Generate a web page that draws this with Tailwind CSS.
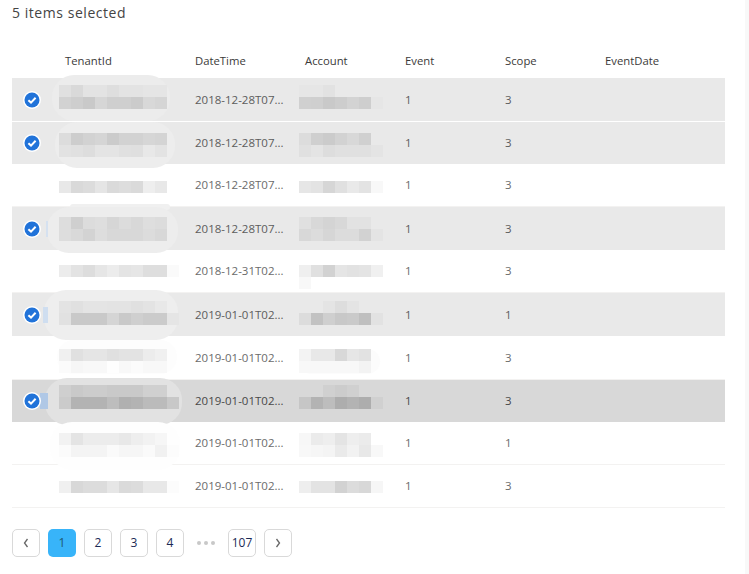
<!DOCTYPE html>
<html lang="en">
<head>
    <meta charset="UTF-8">
    <title>Items</title>
    <script src="https://cdn.jsdelivr.net/npm/@tailwindcss/browser@4"></script>
</head>
<body class="bg-white overflow-hidden font-['Open_Sans',sans-serif]">
    <div class="relative w-[749px] h-[574px] overflow-hidden">
        <div class="absolute top-0 right-0 bottom-0 w-[4px] bg-[#f8f8f8]"></div>

        <div class="pl-3 pt-[3px] w-[725px]">
            <h1 class="h-[20px] leading-[20px] text-[14px] tracking-[0.55px] text-[#444444] font-normal">5 items selected</h1>

            <!-- header -->
            <div class="mt-[22px] h-[33px] grid grid-cols-[53px_130px_110px_100px_100px_100px_1fr] items-center text-[11.3px] text-[#3b3a39] pb-[1px]">
                <span></span>
                <span>TenantId</span>
                <span>DateTime</span>
                <span>Account</span>
                <span>Event</span>
                <span>Scope</span>
                <span>EventDate</span>
            </div>

            <div id="rows"></div>

            <!-- pagination -->
            <nav class="mt-[21px] flex items-center gap-2 text-[12px] text-[#1b2a55]">
                <button class="w-7 h-7 flex items-center justify-center rounded-[5px] border border-[#d9d9d9] bg-white">
                    <svg width="6" height="10" viewBox="0 0 6 10" fill="none" stroke="#666666" stroke-width="1.3"><path d="M4.5 1 L1.5 5 L4.5 9"/></svg>
                </button>
                <button class="w-7 h-7 flex items-center justify-center rounded-[5px] bg-[#38b4f9] text-[#1c5a72]">1</button>
                <button class="w-7 h-7 flex items-center justify-center rounded-[5px] border border-[#d9d9d9] bg-white">2</button>
                <button class="w-7 h-7 flex items-center justify-center rounded-[5px] border border-[#d9d9d9] bg-white">3</button>
                <button class="w-7 h-7 flex items-center justify-center rounded-[5px] border border-[#d9d9d9] bg-white">4</button>
                <span class="w-[28px] flex justify-center gap-[3px]">
                    <i class="w-[4px] h-[4px] rounded-full bg-[#c8c8c8]"></i>
                    <i class="w-[4px] h-[4px] rounded-full bg-[#c8c8c8]"></i>
                    <i class="w-[4px] h-[4px] rounded-full bg-[#c8c8c8]"></i>
                </span>
                <button class="w-7 h-7 flex items-center justify-center rounded-[5px] border border-[#d9d9d9] bg-white">107</button>
                <button class="w-7 h-7 flex items-center justify-center rounded-[5px] border border-[#d9d9d9] bg-white">
                    <svg width="6" height="10" viewBox="0 0 6 10" fill="none" stroke="#666666" stroke-width="1.3"><path d="M1.5 1 L4.5 5 L1.5 9"/></svg>
                </button>
            </nav>
        </div>

        <!-- smudged areas over the table -->
        <div id="blobs" aria-hidden="true"></div>
        <div id="mosaic" aria-hidden="true"></div>
        <div id="checks"></div>
    </div>

    <script>
        const rows = [
            { h: 44, sel: 3, date: '2018-12-28T07...', event: 1, scope: 3 },
            { h: 42, sel: 1, date: '2018-12-28T07...', event: 1, scope: 3 },
            { h: 43, sel: 0, date: '2018-12-28T07...', event: 1, scope: 3 },
            { h: 43, sel: 1, date: '2018-12-28T07...', event: 1, scope: 3 },
            { h: 43, sel: 0, date: '2018-12-31T02...', event: 1, scope: 3 },
            { h: 43, sel: 1, date: '2019-01-01T02...', event: 1, scope: 1 },
            { h: 44, sel: 0, date: '2019-01-01T02...', event: 1, scope: 3 },
            { h: 42, sel: 2, date: '2019-01-01T02...', event: 1, scope: 3 },
            { h: 43, sel: 0, date: '2019-01-01T02...', event: 1, scope: 1 },
            { h: 43, sel: 0, date: '2019-01-01T02...', event: 1, scope: 3 },
        ];

        // --- Table rows ---
        const rowClass = {
            0: 'bg-white border-b border-[#f3f2f1] text-[#6b6b6b]',
            1: 'bg-[#e9e9e9] text-[#5c5c5c]',
            2: 'bg-[#d8d8d8] text-[#484848]',
            3: 'bg-[#e9e9e9] border-b border-white text-[#5c5c5c]',
        };
        document.getElementById('rows').innerHTML = rows.map(r => `
            <div class="grid grid-cols-[53px_130px_110px_100px_100px_100px_1fr] items-center text-[11.5px] ${rowClass[r.sel]}" style="height:${r.h}px">
                <span></span><span></span>
                <span>${r.date}</span>
                <span></span>
                <span>${r.event}</span>
                <span>${r.scope}</span>
                <span></span>
            </div>`).join('');

        // --- Blurred blobs: [x, y, w, h, colour] ---
        const blobs = [
            [52, 75, 118, 46, '#ececec'], [55, 122, 120, 46, '#ededed'], [70, 204, 100, 6, '#f0f0f0'],
            [47, 207, 131, 46, '#ededed'], [44, 290, 134, 50, '#eeeeee'], [57, 340, 120, 34, '#fdfdfd'],
            [45, 378, 137, 47, '#e2e2e2'], [50, 422, 130, 48, '#fefefe'], [299, 349, 81, 25, '#fcfcfc'],
        ];
        document.getElementById('blobs').innerHTML = blobs.map(b =>
            `<div class="absolute rounded-[22px]" style="left:${b[0]}px;top:${b[1]}px;width:${b[2]}px;height:${b[3]}px;background:${b[4]}"></div>`).join('');

        // --- Mosaic strips: [x, y, grey values of the 12px cells] ---
        const strips = [
            [59, 85, 'e0 d9 e3 e3 de e3 e3 e5 e5'], [59, 97, 'd2 ce c9 d6 cf cf cb d8 d5'],
            [59, 133, 'dc cd d2 d5 cb d2 d2 d6 d4'], [59, 145, 'e2 e0 dd e4 e4 e0 df e8 e3'],
            [59, 181, 'e8 d9 dc e5 da dd da ee e8'],
            [59, 217, 'dd cf dc de d6 dc d8 de dc'], [59, 229, 'dd d9 d3 dd d8 d8 d8 dc d8'],
            [59, 265, 'ec e3 dd e6 ec e4 e6 de de fa'],
            [59, 301, 'e3 e0 e4 e4 e3 e3 e0 e3 e8'], [59, 313, 'e1 c9 c9 c9 d5 c9 cf cb cb e5'],
            [59, 349, 'f0 e0 e5 e5 e0 e3 e3 ec f0'], [59, 361, 'fb f6 f8 f8 fe f8 fb f8 f8'],
            [59, 385, 'cf c9 cc cc c9 c9 c9 d0 d0'], [59, 397, 'cb b3 b3 b3 bd b0 b3 bb bb c8'],
            [59, 433, 'f2 e4 ec ec ec e8 ee f2 f6'], [59, 445, 'fb f4 f4 f4 fa f6 f6 fa f1 fc'],
            [59, 481, 'f0 d8 dc dc e6 da dc e8 e8 fc'],

            [299, 85, 'e6 e6 e2 e9 e9'], [299, 97, 'd0 cf c9 cd d3 ce e6'],
            [299, 133, 'dc cf cb d2 d8 d0'], [299, 145, 'e0 e4 dd e0 e0 e0 e4'],
            [299, 181, 'e6 e3 d6 e0 e9 e3 f8'],
            [299, 217, 'e0 d8 d4 d8 e2 e2'], [299, 229, 'd8 dc d6 dc dc d2 e4'],
            [299, 265, 'ef e0 d2 e5 e2 e4 f0'], [299, 277, 'f8'],
            [323, 301, 'e4 dd e4'], [299, 313, 'dc c2 cf c8 ca bf e2'],
            [299, 349, 'f3 e8 e8 d8 e6 e2'], [299, 361, 'f8 f8 f8 f8 f8 f3'],
            [323, 385, 'd0 cc d0'], [299, 397, 'c6 b3 bd ad b3 ad d0'],
            [299, 433, 'f7 eb ee e4 ee eb'], [299, 445, 'f8 f6 f4 ea f2 e8 f8'],
            [299, 481, 'ee e3 e3 d2 dc d8 f6'],
        ];
        document.getElementById('mosaic').innerHTML = strips.map(s =>
            `<div class="absolute flex h-[12px]" style="left:${s[0]}px;top:${s[1]}px">` +
            s[2].split(' ').map(g => `<i class="block w-[12px] h-[12px]" style="background:#${g}${g}${g}"></i>`).join('') +
            `</div>`).join('');

        // --- Check marks: [centre y, width of the blue smear, its colour] ---
        const checks = [[100, 0], [143, 0], [229, 2, '#d5e1f0'], [315, 5, '#cfdef0'], [401, 8, '#b0c8e6']];
        document.getElementById('checks').innerHTML = checks.map(c => `
            ${c[1] ? `<div class="absolute h-[16px]" style="left:${48 - c[1]}px;top:${c[0] - 8}px;width:${c[1]}px;background:${c[2]}"></div>` : ''}
            <svg class="absolute left-[23px]" style="top:${c[0] - 9}px" width="18" height="18" viewBox="0 0 18 18">
                <circle cx="9" cy="9" r="9" fill="#ffffff"/>
                <circle cx="9" cy="9" r="7.5" fill="#2173d9"/>
                <path d="M5.4 9.2 L8 11.6 L12.6 6.8" fill="none" stroke="#ffffff" stroke-width="2"/>
            </svg>`).join('');
    </script>
</body>
</html>
